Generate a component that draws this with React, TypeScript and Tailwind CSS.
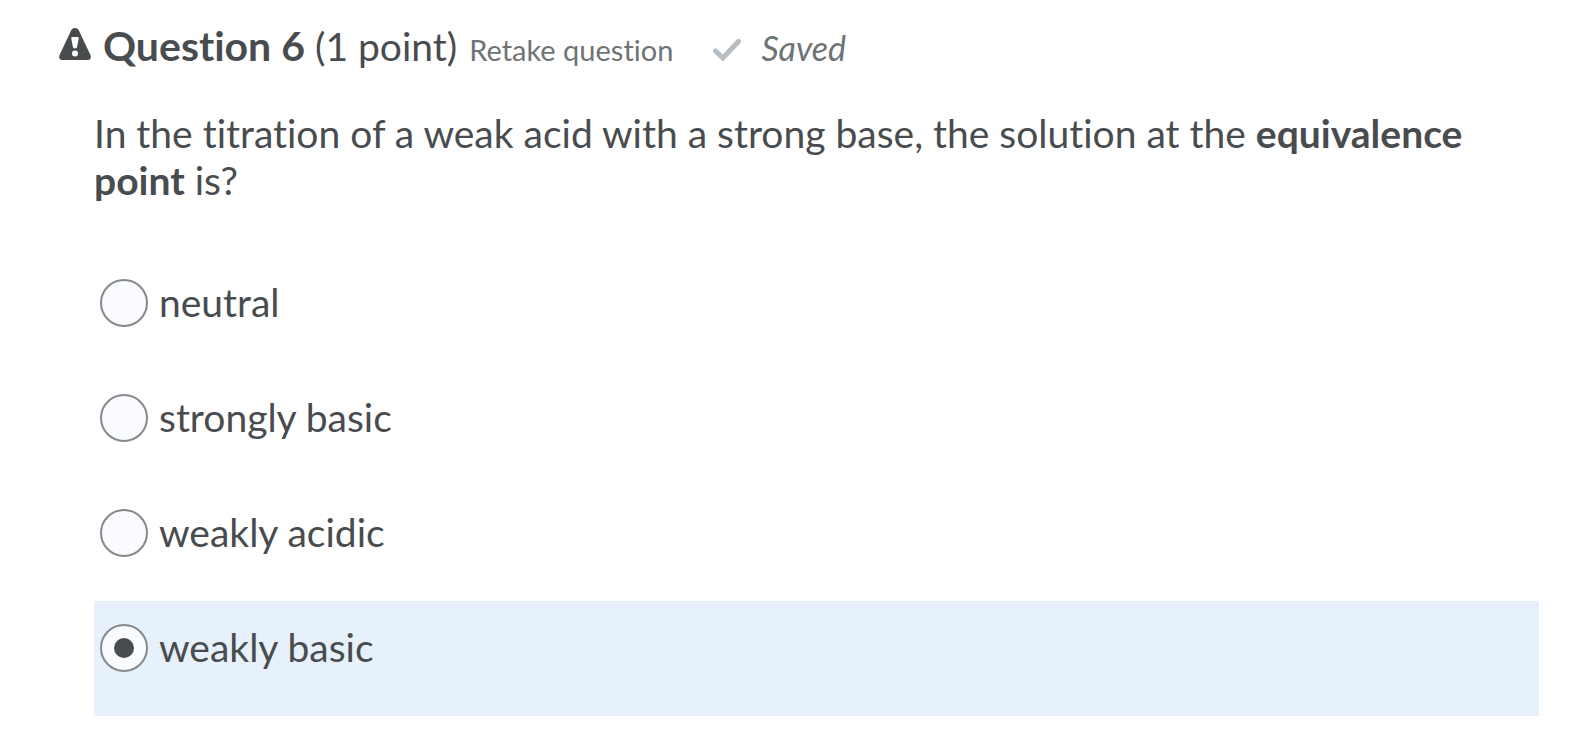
import { useState } from "react";

const options = ["neutral", "strongly basic", "weakly acidic", "weakly basic"];

function WarningIcon() {
  return (
    <svg viewBox="0 0 32 32" className="mt-1.5 size-8 shrink-0" role="img" aria-label="Warning">
      <path
        fill="#494c4e"
        d="M16 0c-1.700 0-3 .9-3.800 2.300L.7 26.800C-.7 29.600.6 32 3.400 32h25.200c2.800 0 4.100-2.400 2.700-5.200L19.800 2.300C19 .9 17.700 0 16 0z"
      />
      <path fill="#fff" d="M13.500 9h5c.9 0 1.300.6 1.200 1.400l-1.600 8.700c-.3 1.700-3.900 1.700-4.200 0l-1.600-8.700C12.200 9.600 12.600 9 13.500 9z" />
      <circle cx="16" cy="25.500" r="3" fill="#fff" />
    </svg>
  );
}

function CheckIcon() {
  return (
    <svg viewBox="0 0 28 22" className="h-[22px] w-7 shrink-0" aria-hidden="true">
      <path d="M2.500 12l7.300 7L25.500 2.500" fill="none" stroke="#b5bdc2" strokeWidth="5" strokeLinecap="round" strokeLinejoin="miter" />
    </svg>
  );
}

export default function App() {
  const [selected, setSelected] = useState("weakly basic");

  return (
    <main className="min-h-screen bg-white pt-[22px] pr-[37px] pl-[59px] font-['Lato',sans-serif] text-[39px] leading-[47px] text-[#494c4e] antialiased [font-variant-ligatures:none]">
      <header className="flex items-start">
        <WarningIcon />
        <div className="ml-3 flex items-baseline">
          <h1 className="whitespace-pre">
            <strong className="text-[41px] font-bold">Question 6</strong> (1 point)
          </h1>
          <a href="#retake" className="ml-3 text-[29px] text-[#6e7376]">
            Retake question
          </a>
          <span className="ml-10 flex items-baseline gap-5 text-[34px] text-[#6e7376] italic">
            <CheckIcon />
            Saved
          </span>
        </div>
      </header>

      <form className="mt-[37px] ml-[35px]">
        <fieldset>
          <legend className="pr-12">
            In the titration of a weak acid with a strong base, the solution at the <strong className="font-bold">equivalence point</strong> is?
          </legend>
          <div className="mt-[52px]">
            {options.map((option) => (
              <label
                key={option}
                className="flex h-[115px] cursor-pointer items-start gap-[11px] pt-[23px] pl-1.5 has-[:checked]:bg-[#e6f1fc]"
              >
                <input
                  type="radio"
                  name="answer"
                  value={option}
                  checked={selected === option}
                  onChange={() => setSelected(option)}
                  className="grid size-12 shrink-0 appearance-none place-items-center rounded-full border-2 border-[#86898b] bg-[#f9fbff] before:size-5 before:rounded-full checked:before:bg-[#494c4e]"
                />
                {option}
              </label>
            ))}
          </div>
        </fieldset>
      </form>
    </main>
  );
}
